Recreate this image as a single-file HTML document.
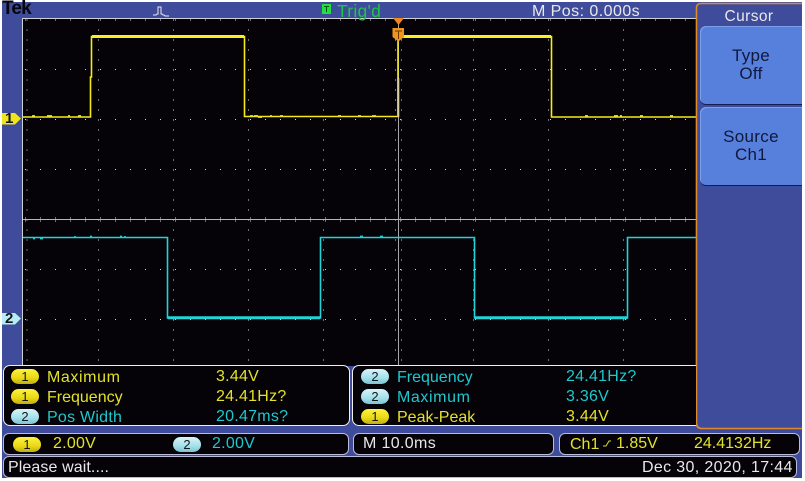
<!DOCTYPE html>
<html><head><meta charset="utf-8">
<style>
html,body{margin:0;padding:0;background:#fff}
#r{position:relative;width:805px;height:481px;overflow:hidden;background:#fff;font-family:"Liberation Sans",sans-serif}
#b{position:absolute;left:2px;top:2px;width:800px;height:476px;background:#3f4c9b}
.t{position:absolute;white-space:nowrap;font-size:16px;line-height:18px;letter-spacing:.25px}
.y{color:#e2e22c}.c{color:#1fc8cc}.w{color:#e8e8e8}
.box{position:absolute;background:#050308;box-sizing:border-box}
.p{position:absolute;width:28px;height:15px;border-radius:8px;text-align:center;font-size:13px;line-height:15px;color:#15151c}
.p1{background:linear-gradient(#fff23a,#e8d818 60%,#bfae10)}
.p2{background:linear-gradient(#d8f4f8,#a4e0ea 60%,#7cc4d4)}
#btn1,#btn2{position:absolute;left:700px;width:102px;background:#5680dc;border-radius:6px 0 0 6px;color:#10183c;font-size:17px;line-height:18px;box-shadow:inset 1px 1px 0 #7da0ea,0 1px 0 #141c50}
#btn1 div,#btn2 div{width:102px;text-align:center;letter-spacing:.3px}
</style></head><body>
<div id="r">
<div id="b"></div>
<svg style="position:absolute;left:0;top:0" width="805" height="481" viewBox="0 0 805 481">
<rect x="22" y="18" width="674" height="348" fill="#050308"/>
<path d="M22.5 18V366M22 18.5H696" stroke="#d0d0d8" stroke-width="1" fill="none"/>
<g stroke="#d8d8d8" stroke-width="1" stroke-dasharray="1 14" fill="none">
<path d="M25 20H696M25 69.5H696M25 119.5H696M25 169.5H696M25 269.5H696M25 319.5H696"/>
<path d="M25 218H696M25 221H696"/>
</g>
<g stroke="#d8d8d8" stroke-width="1" stroke-dasharray="1 9" fill="none">
<path d="M27 19.5V366M98.5 19.5V366M173.5 19.5V366M248.5 19.5V366M323.5 19.5V366M473.5 19.5V366M548.5 19.5V366M623.5 19.5V366"/>
<path d="M395.5 19.5V366M401.5 19.5V366"/>
</g>
<path d="M23 219.5H696" stroke="#b8b8b8" stroke-width="1"/>
<path d="M398.5 19V366" stroke="#a8a8a8" stroke-width="1"/>
<path d="M23 117H90.5V77H91.5V36.5H244.5V116.5H398V36.5H551.5V117H696" fill="none" stroke="#f4ec18" stroke-width="1.6"/>
<path d="M92 36.5H244M400 36.5H551" fill="none" stroke="#f8f020" stroke-width="3"/>
<path d="M32 116h3M47 116h5M68 116h2M78 116h3M250 116h3M254 116h4M258 117h4M270 116h2M280 116h3M338 116h3M358 116h3M372 116h4M585 116h3M614 116h4M620 116h2M640 116h3M670 116h3" stroke="#f0e818" stroke-width="1.8"/>
<path d="M398.3 78V117" stroke="#d8d0a0" stroke-width="2"/>
<path d="M23 237.5H167.5V318H320.5V237.5H474.5V318H627.5V237.5H696" fill="none" stroke="#20d4d8" stroke-width="1.6"/>
<path d="M168 317.8H320M475 317.8H627" fill="none" stroke="#20d4d8" stroke-width="3"/>
<path d="M33 238.5h2M40 238.5h3M74 237h2M90 236.5h2M120 236.5h2M124 237h2M360 236.5h3M380 236.5h3" stroke="#20d0d4" stroke-width="1.8"/>
<path d="M393 18H404L398.5 25Z" fill="#f0881c"/>
<path d="M392.5 28H404V37L398.5 41.5L392.5 37Z" fill="#f0941c"/>
<path d="M395 31H402M398.5 31V39" stroke="#6a3808" stroke-width="1" fill="none"/>
<path d="M2 113H15L21 118.5L15 124.5H2Z" fill="#f0e41c"/>
<path d="M2 313H15L21 318.5L15 324.5H2Z" fill="#b8ecf4"/>
<rect x="322" y="4" width="9" height="10" fill="#20e040"/>
<path d="M324 6.5h5M326.5 6.5v5.5" stroke="#0c5018" stroke-width="1"/>
<path d="M153 15h3l1-1h1V7h3v7h1l1 1h1l1 1h4" fill="none" stroke="#e8e8f0" stroke-width="1"/>
<path d="M802 3.5H701Q696.5 3.5 696.5 8V423Q696.5 428.5 702 428.5H802" fill="#3f4c9b" stroke="#e08a28" stroke-width="1.6"/>
</svg>
<div class="t" style="left:2px;top:0px;font-weight:bold;font-size:19px;color:#07070f;letter-spacing:-.8px">Tek</div>
<div class="t" style="left:337px;top:2px;color:#1fc44a;font-size:17.5px">Trig'd</div>
<div class="t w" style="left:532px;top:3px;letter-spacing:.45px">M Pos: 0.000s</div>
<div class="t" style="left:5px;top:110px;font-weight:bold;font-size:15px;color:#15151c">1</div>
<div class="t" style="left:5px;top:310px;font-weight:bold;font-size:15px;color:#15151c">2</div>
<div class="t w" style="left:696px;top:8px;width:106px;text-align:center;font-size:15.5px;letter-spacing:.4px">Cursor</div>
<div id="btn1" style="top:26px;height:78px"><div style="padding-top:21px">Type<br>Off</div></div>
<div id="btn2" style="top:107px;height:78px"><div style="padding-top:21px">Source<br>Ch1</div></div>

<div class="box" style="left:3px;top:365px;width:347px;height:61px;border:1px solid #f0f0f0;border-radius:7px"></div>
<div class="box" style="left:352px;top:365px;width:344px;height:61px;border:1px solid #f0f0f0;border-right:0;border-radius:7px 0 0 7px"></div>

<div class="p p1" style="left:11px;top:369px">1</div>
<div class="p p1" style="left:11px;top:389px">1</div>
<div class="p p2" style="left:11px;top:409px">2</div>
<div class="t y" style="left:47px;top:369px;letter-spacing:.6px">Maximum</div>
<div class="t y" style="left:47px;top:389px;letter-spacing:0">Frequency</div>
<div class="t c" style="left:47px;top:409px">Pos Width</div>
<div class="t y" style="left:216px;top:368px">3.44V</div>
<div class="t y" style="left:216px;top:388px">24.41Hz?</div>
<div class="t c" style="left:216px;top:408px">20.47ms?</div>

<div class="p p2" style="left:361px;top:369px">2</div>
<div class="p p2" style="left:361px;top:389px">2</div>
<div class="p p1" style="left:361px;top:409px">1</div>
<div class="t c" style="left:397px;top:369px;letter-spacing:0">Frequency</div>
<div class="t c" style="left:397px;top:389px;letter-spacing:.6px">Maximum</div>
<div class="t y" style="left:397px;top:409px;letter-spacing:0">Peak-Peak</div>
<div class="t c" style="left:566px;top:368px">24.41Hz?</div>
<div class="t c" style="left:566px;top:388px">3.36V</div>
<div class="t y" style="left:566px;top:408px">3.44V</div>

<div class="box" style="left:3px;top:433px;width:346px;height:22px;border:1px solid #b8bcd8;border-radius:6px"></div>
<div class="box" style="left:353px;top:433px;width:201px;height:22px;border:1px solid #b8bcd8;border-radius:6px"></div>
<div class="box" style="left:559px;top:433px;width:241px;height:22px;border:1px solid #b8bcd8;border-radius:6px"></div>
<div class="box" style="left:3px;top:456px;width:794px;height:22px;border:1px solid #b8bcd8;border-radius:6px"></div>

<div class="p p1" style="left:13px;top:437px">1</div>
<div class="t y" style="left:53px;top:435px">2.00V</div>
<div class="p p2" style="left:173px;top:437px">2</div>
<div class="t c" style="left:212px;top:435px">2.00V</div>
<div class="t w" style="left:363px;top:435px;letter-spacing:.35px">M 10.0ms</div>
<div class="t y" style="left:570px;top:436px;letter-spacing:0">Ch1</div>
<svg style="position:absolute;left:602px;top:438px" width="10" height="10"><path d="M1 8h3L7 3h2" fill="none" stroke="#dcdc28" stroke-width="1"/></svg>
<div class="t y" style="left:616px;top:435px;letter-spacing:0">1.85V</div>
<div class="t y" style="left:694px;top:435px;letter-spacing:0">24.4132Hz</div>
<div class="t w" style="left:8px;top:459px;letter-spacing:.1px">Please wait....</div>
<div class="t w" style="left:642px;top:459px;letter-spacing:.35px">Dec 30, 2020, 17:44</div>
</div>
</body></html>
